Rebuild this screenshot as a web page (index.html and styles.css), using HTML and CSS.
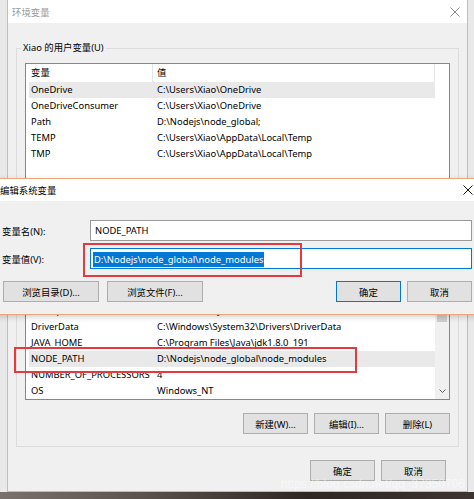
FILE: index.html
```html
<!DOCTYPE html>
<html lang="zh-CN">
<head>
<meta charset="utf-8">
<title>环境变量</title>
<link rel="stylesheet" href="styles.css">
</head>
<body>
<div class="win">
  <div class="titlebar">
    <span class="ttl">环境变量</span>
    <svg class="x" width="10" height="10" viewBox="0 0 10 10"><path d="M0.5 0.5L9.5 9.5M9.5 0.5L0.5 9.5" stroke="#8a8a8a" stroke-width="1" fill="none"/></svg>
  </div>
  <div class="wbody">
    <fieldset class="grp g1">
      <legend>Xiao 的用户变量(U)</legend>
      <div class="list l1">
        <div class="lmain">
          <div class="hdr"><span>变量</span><span>值</span></div>
          <div class="row sel"><span>OneDrive</span><span>C:\Users\Xiao\OneDrive</span></div>
          <div class="row"><span>OneDriveConsumer</span><span>C:\Users\Xiao\OneDrive</span></div>
          <div class="row"><span>Path</span><span>D:\Nodejs\node_global;</span></div>
          <div class="row"><span>TEMP</span><span>C:\Users\Xiao\AppData\Local\Temp</span></div>
          <div class="row"><span>TMP</span><span>C:\Users\Xiao\AppData\Local\Temp</span></div>
        </div>
        <div class="sbspace"></div>
      </div>
    </fieldset>
    <fieldset class="grp g2">
      <legend>系统变量(S)</legend>
      <div class="list l2">
        <div class="lmain">
          <div class="hdr"><span>变量</span><span>值</span></div>
          <div class="row"><span></span><span></span></div>
          <div class="row"><span></span><span></span></div>
          <div class="row"><span></span><span></span></div>
          <div class="row"><span>ComSpec</span><span>C:\Windows\system32\cmd.exe</span></div>
          <div class="row"><span>DriverData</span><span>C:\Windows\System32\Drivers\DriverData</span></div>
          <div class="row"><span>JAVA_HOME</span><span>C:\Program Files\Java\jdk1.8.0_191</span></div>
          <div class="row sel"><span>NODE_PATH</span><span>D:\Nodejs\node_global\node_modules</span></div>
          <div class="row"><span>NUMBER_OF_PROCESSORS</span><span>4</span></div>
          <div class="row"><span>OS</span><span>Windows_NT</span></div>
        </div>
        <div class="sb">
          <div class="arr"><svg width="7" height="4" viewBox="0 0 7 4"><path d="M0.5 3.5L3.5 0.5L6.5 3.5" stroke="#606060" fill="none"/></svg></div>
          <div class="thumb"></div>
          <div class="track"></div>
          <div class="arr"><svg width="7" height="4" viewBox="0 0 7 4"><path d="M0.5 0.5L3.5 3.5L6.5 0.5" stroke="#606060" fill="none"/></svg></div>
        </div>
      </div>
      <div class="brow">
        <div class="btn">新建(W)...</div>
        <div class="btn">编辑(I)...</div>
        <div class="btn">删除(L)</div>
      </div>
    </fieldset>
    <div class="brow bottom">
      <div class="btn">确定</div>
      <div class="btn">取消</div>
    </div>
  </div>
</div>

<div class="dlg">
  <div class="dtitle">
    <span>编辑系统变量</span>
    <svg class="x" width="10" height="10" viewBox="0 0 10 10"><path d="M0.5 0.5L9.5 9.5M9.5 0.5L0.5 9.5" stroke="#111" stroke-width="1" fill="none"/></svg>
  </div>
  <div class="dbody">
    <div class="frow"><span>变量名(N):</span><div class="tb">NODE_PATH</div></div>
    <div class="frow"><span>变量值(V):</span><div class="tb focus"><span class="selt">D:\Nodejs\node_global\node_modules</span></div></div>
    <div class="drow">
      <div class="bgrp">
        <div class="btn wide">浏览目录(D)...</div>
        <div class="btn wide">浏览文件(F)...</div>
      </div>
      <div class="bgrp r">
        <div class="btn def">确定</div>
        <div class="btn">取消</div>
      </div>
    </div>
  </div>
</div>

<div class="mark m1"></div>
<div class="mark m2"></div>
<div class="wm">https://blog.csdn.net/qq_37350706</div>
</body>
</html>
```

FILE: styles.css
```css
html, body {
  margin: 0;
  padding: 0;
}
body {
  width: 474px;
  height: 499px;
  overflow: hidden;
  position: relative;
  font-family: "Noto Sans", "Noto Sans CJK SC", sans-serif;
  font-size: 9.4px;
  color: #000;
  background:
    linear-gradient(to right, #7a716c 0%, #5b514d 30%, #2e2623 65%, #3d3431 100%) left bottom / 100% 7px no-repeat,
    #e9e9e9;
}

/* main window */
.win {
  position: absolute;
  left: 7px;
  top: 0;
  width: 461px;
  height: 492px;
  box-sizing: border-box;
  border: 1px solid #bdbdbd;
  border-top: 0;
  background: #f0f0f0;
  display: flex;
  flex-direction: column;
}
.titlebar {
  height: 23px;
  flex: none;
  background: #fff;
  display: flex;
  align-items: center;
  justify-content: space-between;
  padding: 0 7px 0 4px;
}
.ttl {
  color: #9a9a9a;
}
.x {
  display: block;
}
.wbody {
  flex: 1;
  padding: 18px 8px 0 8px;
  display: flex;
  flex-direction: column;
}
.grp {
  margin: 0;
  border: 1px solid #dcdcdc;
  padding: 0 8px;
  min-width: 0;
}
.grp legend {
  padding: 0 2px;
  margin-left: -4px;
  line-height: 14px;
  height: 14px;
}
.g1 {
  height: 160px;
  box-sizing: border-box;
}
.g2 {
  margin-top: 13px;
  padding-bottom: 12px;
}

/* list view */
.list {
  margin-top: 8px;
  border: 1px solid #828790;
  background: #fff;
  display: grid;
  grid-template-columns: 1fr 14px;
}
.l1 {
  height: 125px;
  box-sizing: border-box;
}
.lmain {
  padding-left: 3px;
}
.hdr, .row {
  display: grid;
  grid-template-columns: 124px 1fr;
  white-space: nowrap;
  overflow: hidden;
}
.hdr {
  height: 18px;
  line-height: 18px;
  border-right: 1px solid #e5e5e5;
}
.hdr span:first-child {
  border-right: 1px solid #e5e5e5;
}
.hdr span, .row span {
  padding-left: 4px;
  overflow: hidden;
}
.hdr span:first-child, .row span:first-child {
  padding-left: 2px;
}
.row {
  height: 16px;
  line-height: 16px;
}
.row.sel {
  background: #e9e9e9;
}
.sb {
  background: #f0f0f0;
  display: flex;
  flex-direction: column;
}
.arr {
  height: 16px;
  display: flex;
  align-items: center;
  justify-content: center;
}
.arr svg { display: block; }
.thumb {
  height: 69px;
  margin: 0 2px;
  background: #cdcdcd;
}
.track { flex: 1; }

/* buttons */
.brow {
  display: flex;
  justify-content: flex-end;
  gap: 6px;
  margin-top: 13px;
}
.brow.bottom {
  padding-right: 13px;
}
.btn {
  box-sizing: border-box;
  width: 65px;
  height: 21px;
  border: 1px solid #adadad;
  background: #e1e1e1;
  display: flex;
  align-items: center;
  justify-content: center;
  white-space: nowrap;
}
.btn.def {
  border-color: #0078d7;
}
.btn.wide {
  width: 96px;
}

/* edit dialog */
.dlg {
  position: absolute;
  left: -8px;
  top: 178px;
  width: 490px;
  height: 137px;
  box-sizing: border-box;
  border: 1px solid #eea57a;
  background: #f0f0f0;
  display: flex;
  flex-direction: column;
  box-shadow: 0 2px 6px rgba(0, 0, 0, 0.18);
}
.dtitle {
  height: 22px;
  flex: none;
  background: #fff;
  display: flex;
  align-items: center;
  justify-content: space-between;
  padding: 0 8px 0 7px;
}
.dbody {
  flex: 1;
  padding: 19px 9px 0 9px;
  display: flex;
  flex-direction: column;
  gap: 7px;
}
.frow {
  display: grid;
  grid-template-columns: 88px 1fr;
  align-items: center;
  height: 21px;
}
.tb {
  box-sizing: border-box;
  height: 21px;
  border: 1px solid #9a9a9a;
  background: #fff;
  padding-left: 4px;
  line-height: 19px;
  white-space: nowrap;
}
.tb.focus {
  border-color: #0078d7;
  padding-left: 2px;
}
.selt {
  display: inline-block;
  vertical-align: middle;
  line-height: 15px;
  padding: 0 1px;
  background: #0078d7;
  color: #fff;
}
.drow {
  margin-top: 5px;
  display: flex;
  justify-content: space-between;
  padding-left: 1px;
}
.bgrp {
  display: flex;
  gap: 8px;
}
.bgrp.r {
  gap: 6px;
}

/* annotation boxes */
.mark {
  position: absolute;
  box-sizing: border-box;
  border: 2px solid #e43a3d;
}
.m1 {
  left: 83px;
  top: 243px;
  width: 219px;
  height: 34px;
}
.m2 {
  left: 14px;
  top: 347px;
  width: 343px;
  height: 26px;
}

/* watermark */
.wm {
  position: absolute;
  right: 9px;
  top: 477px;
  font-family: "Liberation Sans", sans-serif;
  font-size: 12px;
  color: rgba(255, 255, 255, 0.5);
  white-space: nowrap;
}
```
